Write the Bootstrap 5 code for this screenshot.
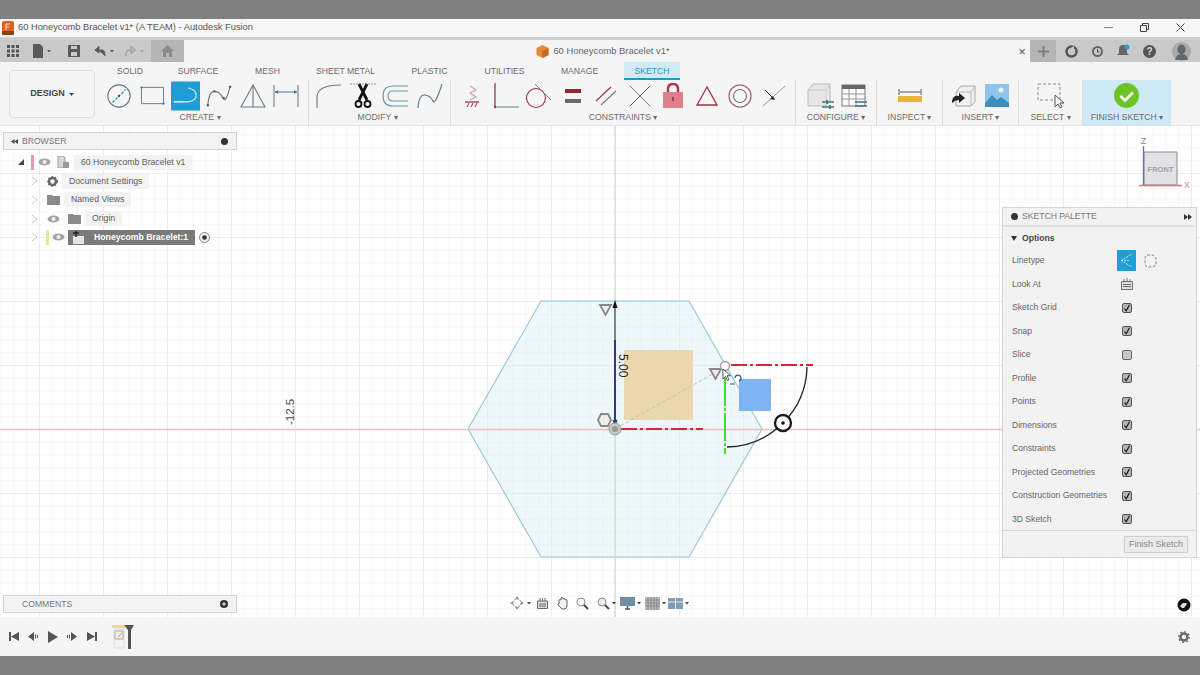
<!DOCTYPE html>
<html lang="en"><head><meta charset="utf-8"><title>Autodesk Fusion</title>
<link href="https://cdn.jsdelivr.net/npm/bootstrap@5.3.0/dist/css/bootstrap.min.css" rel="stylesheet">
<style>
html,body{height:675px;width:1200px;overflow:hidden;margin:0}
body{font-family:"Liberation Sans",Arial,sans-serif;color:#555;background:#808080;font-size:9px;line-height:1}
.edge-top{height:19px;background:#808080}
.edge-bot{height:19px;background:#808080}
.titlebar{height:18px;font-size:9.3px;background:#f7f7f7;color:#555;padding-left:2px}
.titlebar .ttl{margin-left:4px}
.winrow{padding-right:2px}
.winbtn{width:36px;text-align:center}
.qat{height:25px;border-top:3px solid #cfcfcf;background:#f5f5f5}
.qat-l{width:184px;background:#c9c9c9}
.mg2{margin-left:2px}.mg4{margin-left:4px}.mg5{margin-left:5.5px}.mg7{margin-left:7px}.mg8{margin-left:8px}.mg9{margin-left:9px}.mg10{margin-left:10px}.mg13{margin-left:13px}.mg14{margin-left:14px}.mg16{margin-left:16px}.mg17{margin-left:17px}.mg3{margin-left:3px}.mg6{margin-left:6px}
.qat-home{width:33px;background:#b5b5b5;height:100%;margin-left:auto}
.qat-mid{font-size:9.4px;color:#666;padding-left:8px}
.qat-x{width:16px;color:#555;font-size:13px}
.qat-r{width:170px;background:#c9c9c9}
.qat-plus{width:26px;height:100%;background:#b5b5b5}
.ribbon{height:64px;background:#f5f5f5;border-bottom:1px solid #e4e4e4}
.design-col{width:102px;padding:8px 0 0 9px;flex:none}
.design-btn{width:86px;height:48px;border:1px solid #dedede;border-radius:2px;background:#f5f5f5;font-size:9px;font-weight:700;color:#444}
.tabs{height:18px;font-size:8.6px;color:#6a6a6a}
.tabitem{text-align:center;height:18px;line-height:18px}
.t1{width:56px}.t2{width:80px}.t3{width:59px}.t4{width:97px}.t5{width:71px}.t6{width:79px}.t7{width:71px}
.t8{width:56px;margin-left:9px;background:#d2ecf6;color:#1c9cc4;border-bottom:2px solid #1c9cc4;height:18px}
.tool-row{height:46px}
.grp{height:46px;flex:none;border-right:1px solid #dcdcdc}
.g1{width:207px}.g2{width:142px}.g3{width:345px}.g4{width:81px}.g5{width:66px}.g6{width:76px}.g7{width:64px}
.g8{width:88px;background:#cfe9f6;height:46px}
.gicons{height:31px;justify-content:center}
.g1 .gicons{justify-content:flex-start}
.g1 .glabel{padding-right:10px}
.g2 .glabel{padding-right:4px}
.g4 .gicons{padding-left:3px}
.g6 .gicons{padding-right:0}
.g6 .ic:first-child{width:32px}
.g8 .gicons{padding-right:2px}
.ic{width:33.5px;display:flex;align-items:center;justify-content:center;flex:none}
.ic svg{display:block}
.ic-blue{width:33.5px;padding-right:3px}
.glabel{font-size:8.7px;color:#6c6c6c;text-align:center;height:14px;line-height:13px;white-space:nowrap}
.canvasbox{height:491px;position:relative;background:#fff;overflow:hidden}
.canvas-svg{display:block}
.pnl-bar{position:absolute;left:3px;width:234px;height:18px;background:#f3f3f3;border:1px solid #d2d2d2;font-size:8.6px;color:#777;padding:0 8px 0 7px}
.pnl-browser{top:6px}.pnl-comments{top:469px;padding-left:18px}
.dotbtn{width:7px;height:7px;border-radius:50%;background:#333;margin-left:auto;display:block}
.tree{position:absolute;left:14px;top:27px;font-size:8.7px;color:#5c5c5c}
.trow{height:18.75px}
.tlabel{background:#f3f3f3;height:15px;line-height:15px;padding:0 7px}
.tarrow{width:0;height:0;border-left:5px solid #fff;border-top:4px solid transparent;border-bottom:4px solid transparent;margin:0 10px 0 18px;filter:drop-shadow(0 0 .7px #111)}
.tarrow-s{margin-right:9px}
.tsel{background:#7a7a7a;color:#fff;font-weight:700;height:15px;line-height:15px;width:127px;padding-left:26px;white-space:nowrap;position:relative}
.palette{position:absolute;left:1002px;top:81px;width:195px;height:351px;background:#f2f2f2;border:1px solid #d4d4d4;font-size:8.6px;color:#666}
.pal-head{height:19px;border-bottom:2px solid #e0e0e0;padding:0 4px 0 8px;color:#777}
.pal-opt{height:22px;padding:1px 0 0 8px;font-weight:700;color:#444}
.caret-d{width:0;height:0;border-left:3px solid transparent;border-right:3px solid transparent;border-top:5px solid #333;margin-right:5px}
.pal-row{height:23.5px;padding-left:9px;white-space:nowrap}
.pal-lab{width:104px;flex:none}
.pal-ctl{width:22px;display:flex;justify-content:center;flex:none}
.pal-foot{position:absolute;left:0;right:0;bottom:0;height:27px;border-top:1px solid #d8d8d8;padding:0 8px}
.finbtn{font-size:9px;padding:0;width:64px;height:17px;line-height:15px;background:#ebebeb;border:1px solid #cfcfcf;color:#888;border-radius:0}
.form-check-input.chk{width:10px;height:10px;margin:0;border:1px solid #666;border-radius:2px;background-color:#c8c8c8;opacity:1;float:none}
.form-check-input.chk:checked{background-color:#b4b4b4;border-color:#555;background-size:10px 10px;background-image:url("data:image/svg+xml,%3csvg xmlns='http://www.w3.org/2000/svg' viewBox='0 0 10 10'%3e%3cpath fill='none' stroke='%23111' stroke-width='1.1' d='M2.5 5.5l1.7 2.2L7.500 1.8'/%3e%3c/svg%3e")}
.lt-on{width:19px;height:21px;background:#1f9fd5;display:flex;align-items:center;justify-content:center;margin-left:1px}
.navtool{position:absolute;left:510px;top:469px;height:16px}
.timeline{height:39px;background:#f5f5f5;padding:0 10px 0 4px}
.tl-ctl{width:19.5px;display:flex;justify-content:center}
</style></head>
<body>
<div class="edge-top"></div>
<div class="titlebar d-flex align-items-center">
  <svg width="12" height="14" viewBox="0 0 12 14"><rect width="12" height="14" rx="2" fill="#d9641e"/><rect y="10" width="12" height="4" rx="1" fill="#8c3d12"/><path d="M4 3h4M4 3v6M4 6h3" stroke="#ffd9b0" stroke-width="1.200" fill="none"/></svg>
  <span class="ttl">60 Honeycomb Bracelet v1* (A TEAM) - Autodesk Fusion</span>
  <div class="ms-auto d-flex align-items-center winrow">
    <div class="winbtn"><svg width="9" height="9" viewBox="0 0 9 9"><path d="M0 4.500h9" stroke="#888"/></svg></div>
    <div class="winbtn"><svg width="9" height="9" viewBox="0 0 9 9"><path d="M.5 2.500h6v6h-6zM2.500 2.500v-2h6v6h-2" fill="none" stroke="#444"/></svg></div>
    <div class="winbtn"><svg width="9" height="9" viewBox="0 0 9 9"><path d="M.5.5l8 8M8.500.5l-8 8" stroke="#444"/></svg></div>
  </div>
</div>
<div class="qat d-flex">
  <div class="qat-l d-flex align-items-center">
    <svg class="mg7" width="12" height="12" viewBox="0 0 12 12" fill="#555"><path d="M0 0h3v3H0zM4.500 0h3v3h-3zM9 0h3v3H9zM0 4.500h3v3H0zM4.500 4.500h3v3h-3zM9 4.500h3v3H9zM0 9h3v3H0zM4.500 9h3v3h-3zM9 9h3v3H9z"/></svg>
    <svg class="mg14" width="18" height="14" viewBox="0 0 18 14" fill="#5a5a5a"><path d="M0 0h7l3 3v11H0z"/><path d="M14 6h4l-2 2.500z"/></svg>
    <svg class="mg17" width="12" height="12" viewBox="0 0 12 12"><path d="M0 0h12v12H0z" fill="#5a5a5a"/><path d="M3 1h6v3H3zM3 7h6v4H3z" fill="#c9c9c9"/></svg>
    <svg class="mg14" width="21" height="11" viewBox="0 0 21 11"><path d="M1 4l4-3.500V7zM4 4h4q3 0 3 6" fill="#5a5a5a" stroke="#5a5a5a"/><path d="M16 4h4l-2 2.500z" fill="#5a5a5a"/></svg>
    <svg class="mg9" width="21" height="11" viewBox="0 0 21 11"><path d="M11 4L7 .5V7zM8 4H5q-3 0-3 6" fill="none" stroke="#a5a5a5" stroke-width="1.500"/><path d="M16 4h4l-2 2.500z" fill="#a5a5a5"/></svg>
    <div class="qat-home d-flex align-items-center justify-content-center"><svg width="13" height="12" viewBox="0 0 13 12" fill="#8b8b8b"><path d="M6.500 0L13 6h-2v6H8V8H5v4H2V6H0z"/></svg></div>
  </div>
  <div class="qat-mid flex-grow-1 d-flex align-items-center justify-content-center">
    <svg class="me-1" width="13" height="13" viewBox="0 0 13 13"><path d="M6.500 0l6 3v7l-6 3-6-3V3z" fill="#e58a33"/><path d="M6.500 6l6-3v7l-6 3z" fill="#c96a1a"/></svg>
    <span>60 Honeycomb Bracelet v1*</span>
  </div>
  <div class="qat-x text-center align-self-center">&times;</div>
  <div class="qat-r d-flex align-items-center">
    <div class="qat-plus d-flex align-items-center justify-content-center"><svg width="11" height="11" viewBox="0 0 11 11"><path d="M5.500 0v11M0 5.500h11" stroke="#7e7e7e" stroke-width="2"/></svg></div>
    <svg class="mg9" width="13" height="13" viewBox="0 0 13 13"><circle cx="6.500" cy="6.500" r="5" fill="none" stroke="#555" stroke-width="2.500"/><path d="M6 3l3-2v3z" fill="#c9c9c9"/></svg>
    <svg class="mg13" width="13" height="13" viewBox="0 0 13 13"><circle cx="6.500" cy="6.500" r="5.500" fill="#666"/><circle cx="6.500" cy="6.500" r="3.500" fill="#ccc"/><path d="M6.500 4v3h2" stroke="#444" fill="none"/></svg>
    <svg class="mg13" width="13" height="14" viewBox="0 0 13 14"><path d="M6 1q4 0 4 5v3l2 2H0l2-2V6q0-5 4-5z" fill="#666"/><circle cx="10" cy="3" r="2.500" fill="#1f9fd5"/></svg>
    <svg class="mg13" width="13" height="13" viewBox="0 0 13 13"><circle cx="6.500" cy="6.500" r="6.500" fill="#555"/><text x="6.500" y="10" font-size="10" font-weight="700" fill="#ddd" text-anchor="middle" font-family="Liberation Sans">?</text></svg>
    <svg class="mg16" width="19" height="19" viewBox="0 0 19 19"><circle cx="9.500" cy="9.500" r="9.500" fill="#a9a9a9"/><ellipse cx="9.500" cy="7.500" rx="4" ry="5" fill="#5f6870"/><path d="M3 18q1-6 6.500-6T16 18z" fill="#5f6870"/></svg>
  </div>
</div>
<div class="ribbon d-flex">
  <div class="design-col"><button type="button" class="btn design-btn d-flex align-items-center justify-content-center gap-1 p-0 rounded-1">DESIGN <svg width="5" height="3" viewBox="0 0 5 3"><path d="M0 0h5L2.500 3z" fill="#444"/></svg></button></div>
  <div class="flex-grow-1">
    <div class="tabs d-flex">
      <div class="tabitem t1">SOLID</div><div class="tabitem t2">SURFACE</div><div class="tabitem t3">MESH</div><div class="tabitem t4">SHEET METAL</div><div class="tabitem t5">PLASTIC</div><div class="tabitem t6">UTILITIES</div><div class="tabitem t7">MANAGE</div><div class="tabitem t8">SKETCH</div>
    </div>
    <div class="tool-row d-flex">
      <div class="grp g1">
        <div class="gicons d-flex">
          <div class="ic"><svg width="26" height="26" viewBox="0 0 28 28"><circle cx="14" cy="14" r="12" fill="none" stroke="#5b7684" stroke-width="1.200"/><path d="M7 21L21 7" stroke="#2a9bc9" stroke-width="1.500" stroke-dasharray="3 1.500"/><circle cx="14" cy="14" r="1.300" fill="#456"/></svg></div>
          <div class="ic"><svg width="27" height="23" viewBox="0 0 28 24"><path d="M2.500 3.500h23v17h-23z" fill="none" stroke="#6a7a84"/><path d="M1.500 2.500h2v2h-2zM24.500 19.500h2v2h-2z" fill="#2a7ba9"/></svg></div>
          <div class="ic"><svg width="29" height="30" viewBox="0 0 30 30"><rect width="30" height="30" fill="#1d9ed6"/><path d="M3 21h15q8-1 8-7 0-5-7-7" fill="none" stroke="#cfeaf6" stroke-width="1.200"/><path d="M18 7h2M3 21h10" stroke="#fff" stroke-dasharray="2 1"/></svg></div>
          <div class="ic"><svg width="26" height="26" viewBox="0 0 28 28"><path d="M2 24Q3 9 9 9t9 7 8-12" fill="none" stroke="#6a7a84" stroke-width="1.200"/><g fill="#4a6070"><circle cx="2" cy="24" r="1.300"/><circle cx="9" cy="9" r="1.300"/><circle cx="19" cy="16" r="1.300"/><circle cx="26" cy="4" r="1.300"/></g></svg></div>
          <div class="ic"><svg width="26" height="26" viewBox="0 0 26 26"><path d="M13 2L1 24h24zM13 2v22" fill="none" stroke="#6d7a82" stroke-width="1.100"/></svg></div>
          <div class="ic"><svg width="26" height="24" viewBox="0 0 26 24"><path d="M1 1v22M25 1v22" stroke="#6d7a82"/><path d="M2 8h22" stroke="#2a7ba9"/><path d="M2 8l3-2v4zM24 8l-3-2v4z" fill="#2a7ba9"/></svg></div>
        </div>
        <div class="glabel">CREATE <span class="small">&#9662;</span></div>
      </div>
      <div class="grp g2">
        <div class="gicons d-flex">
          <div class="ic"><svg width="28" height="26" viewBox="0 0 28 26"><path d="M2 25V14Q2 2 26 2" fill="none" stroke="#6c7a82" stroke-width="1.100"/></svg></div>
          <div class="ic"><svg width="26" height="26" viewBox="0 0 26 26"><path d="M0 1h26" stroke="#999" stroke-dasharray="2 1"/><path d="M9 1l8 16M17 1L9 17" stroke="#111" stroke-width="2.800"/><circle cx="8.500" cy="21" r="3" fill="none" stroke="#111" stroke-width="1.800"/><circle cx="17.500" cy="21" r="3" fill="none" stroke="#111" stroke-width="1.800"/></svg></div>
          <div class="ic"><svg width="28" height="22" viewBox="0 0 28 22"><path d="M26 1H11Q1 1 1 11t10 10h15M26 6H11q-5 0-5 5t5 5h15" fill="none" stroke="#6d98aa" stroke-width="1.200"/></svg></div>
          <div class="ic"><svg width="26" height="26" viewBox="0 0 26 26"><path d="M1 25q1-14 7-13t8 6 9-17" fill="none" stroke="#5f8494" stroke-width="1.200"/></svg></div>
        </div>
        <div class="glabel">MODIFY <span class="small">&#9662;</span></div>
      </div>
      <div class="grp g3">
        <div class="gicons d-flex">
          <div class="ic"><svg width="16" height="24" viewBox="0 0 16 24"><path d="M6 2l6 4-6 3 6 4-6 3" fill="none" stroke="#c9a9a9" stroke-width="1.200"/><path d="M1 18h14" stroke="#a03048" stroke-width="1.300"/><path d="M3 23l2-4M7 23l2-4M11 23l2-4" stroke="#a03048"/></svg></div>
          <div class="ic"><svg width="26" height="26" viewBox="0 0 26 26"><path d="M2 0v24" stroke="#a03048" stroke-width="1.300"/><path d="M2 24h24" stroke="#6d7a82"/><rect x="1" y="23" width="2" height="2" fill="#a03048"/></svg></div>
          <div class="ic"><svg width="26" height="26" viewBox="0 0 26 26"><circle cx="10" cy="15" r="9.500" fill="none" stroke="#a03048" stroke-width="1.100"/><path d="M9 1l16 16" stroke="#7a7a7a"/></svg></div>
          <div class="ic"><svg width="18" height="14" viewBox="0 0 18 14"><path d="M1 0h16v4H1z" fill="#9c2438"/><path d="M1 10h16v4H1z" fill="#6a6a6a"/></svg></div>
          <div class="ic"><svg width="22" height="20" viewBox="0 0 22 20"><path d="M1 15L16 1" stroke="#a03048" stroke-width="1.100"/><path d="M6 19L21 5" stroke="#7a7a7a" stroke-width="1.100"/></svg></div>
          <div class="ic"><svg width="22" height="22" viewBox="0 0 22 22"><path d="M1 1l20 20" stroke="#7a7a7a"/><path d="M21 1L1 21" stroke="#a03048"/></svg></div>
          <div class="ic"><svg width="20" height="25" viewBox="0 0 20 25"><path d="M5 10V6q0-5 5-5t5 5v4" fill="none" stroke="#a53a50" stroke-width="2.500"/><rect y="9" width="20" height="16" fill="#df7f8e"/><rect x="9" y="14" width="2" height="4" fill="#a53a50"/></svg></div>
          <div class="ic"><svg width="22" height="20" viewBox="0 0 22 20"><path d="M11 1L1 19h20z" fill="none" stroke="#a03048" stroke-width="1.300"/></svg></div>
          <div class="ic"><svg width="24" height="24" viewBox="0 0 24 24"><circle cx="12" cy="12" r="11" fill="none" stroke="#a05060" stroke-width="1.100"/><circle cx="12" cy="12" r="6.500" fill="none" stroke="#777" stroke-width="1.100"/></svg></div>
          <div class="ic"><svg width="24" height="22" viewBox="0 0 24 22"><path d="M1 21L23 1" stroke="#999"/><path d="M3 5l9 9" stroke="#222"/><path d="M13 15l-5-1 3-3z" fill="#222"/></svg></div>
        </div>
        <div class="glabel">CONSTRAINTS <span class="small">&#9662;</span></div>
      </div>
      <div class="grp g4">
        <div class="gicons d-flex">
          <div class="ic"><svg width="28" height="26" viewBox="0 0 28 26"><path d="M1 7l5-6h17v18l-5 4H1z" fill="#e6e6e6" stroke="#bbb"/><path d="M1 7h18v16M19 7l4-6" fill="none" stroke="#ccc"/><path d="M15 19h12M15 24h12" stroke="#46708a" stroke-width="1.400"/><rect x="19" y="17" width="2" height="4" fill="#3a8a7a"/><rect x="22" y="22" width="2" height="4" fill="#3a8a7a"/></svg></div>
          <div class="ic"><svg width="26" height="24" viewBox="0 0 26 24"><rect x="1" y="1" width="23" height="21" fill="#fafafa" stroke="#777"/><rect x="1" y="1" width="23" height="4" fill="#666"/><path d="M1 10h23M1 15h23M8 5v17M15 5v17" stroke="#999"/><path d="M14 18h12M14 22h12" stroke="#46708a" stroke-width="1.300"/></svg></div>
        </div>
        <div class="glabel">CONFIGURE <span class="small">&#9662;</span></div>
      </div>
      <div class="grp g5">
        <div class="gicons d-flex">
          <div class="ic"><svg width="24" height="14" viewBox="0 0 24 14"><path d="M1 0v6M23 0v6M2 3h20" stroke="#555"/><rect y="7" width="24" height="6" fill="#e8b23c"/></svg></div>
        </div>
        <div class="glabel">INSPECT <span class="small">&#9662;</span></div>
      </div>
      <div class="grp g6">
        <div class="gicons d-flex">
          <div class="ic"><svg width="24" height="22" viewBox="0 0 24 22"><path d="M4 7l5-6h14v16l-4 4H4z" fill="#f0f0f0" stroke="#aaa"/><path d="M4 7h15v14M19 7l4-6" fill="none" stroke="#bbb"/><path d="M0 16q1-6 7-5V8l6 5-6 5v-3q-4 0-7 3z" fill="#222"/></svg></div>
          <div class="ic"><svg width="24" height="23" viewBox="0 0 24 23"><rect width="24" height="23" fill="#8dc6ea"/><circle cx="16" cy="6" r="2.500" fill="#e6f4fc"/><path d="M0 19l7-8 5 5 4-3 8 6v4H0z" fill="#3d8fc2"/></svg></div>
        </div>
        <div class="glabel">INSERT <span class="small">&#9662;</span></div>
      </div>
      <div class="grp g7">
        <div class="gicons d-flex">
          <div class="ic"><svg width="28" height="26" viewBox="0 0 28 26"><path d="M1 1h22v16H1z" fill="none" stroke="#6d9a85" stroke-dasharray="3 2"/><path d="M18 12v12l3-3 2 4 2-1-2-4h4z" fill="#f4f4f4" stroke="#555"/></svg></div>
        </div>
        <div class="glabel">SELECT <span class="small">&#9662;</span></div>
      </div>
      <div class="g8">
        <div class="gicons d-flex">
          <div class="ic"><svg width="25" height="25" viewBox="0 0 25 25"><circle cx="12.500" cy="12.500" r="12.500" fill="#6cc524"/><path d="M6.500 13l4.500 4.500 8-8" fill="none" stroke="#f3f3f3" stroke-width="2.800"/></svg></div>
        </div>
        <div class="glabel">FINISH SKETCH <span class="small">&#9662;</span></div>
      </div>
    </div>
  </div>
</div>
<div class="canvasbox">
  <svg class="canvas-svg" width="1200" height="491" viewBox="0 126 1200 491">
    <defs>
      <pattern id="mn" x="39" y="45" width="12.800" height="12.800" patternUnits="userSpaceOnUse"><path d="M12.800 0H0V12.800" fill="none" stroke="#f1f1f1" stroke-width="1"/></pattern>
      <pattern id="mj" x="39" y="45" width="64" height="64" patternUnits="userSpaceOnUse"><path d="M64 0H0V64" fill="none" stroke="#dfdfdf" stroke-width="1"/></pattern>
    </defs>
    <rect x="0" y="126" width="1200" height="491" fill="#fff"/>
    <rect x="0" y="126" width="1200" height="491" fill="url(#mn)"/>
    <rect x="0" y="126" width="1200" height="491" fill="url(#mj)"/>
    <polygon points="468,429 541,301 689,301 762,429 689,557 541,557" fill="#cfe8f6" fill-opacity=".36" stroke="#97c8d3" stroke-width="1.200"/>
    <path d="M0 429.500H1200" stroke="#f0bcbc" stroke-width="1.300"/>
    <path d="M615 126V617" stroke="#b9dfb9"/>
    <text transform="translate(294,425) rotate(-90)" font-family="Liberation Sans" font-size="11.500" fill="#444">-12.5</text>
    <rect x="624" y="350" width="69" height="70" fill="#ebd8ad"/>
    <rect x="739" y="379" width="32" height="32" fill="#7fb4f4"/>
    <path d="M615 429L725 367" stroke="#c4c4b0" stroke-dasharray="4 2"/>
    <path d="M615 303V340" stroke="#666" stroke-width="1.500"/>
    <path d="M615 340V426" stroke="#2c3a8c" stroke-width="2"/>
    <path d="M615 300l-2.500 8h5z" fill="#111"/>
    <path d="M615 428l-2.500-8h5z" fill="#2c3a8c"/>
    <text transform="translate(619,354) rotate(90)" font-family="Liberation Sans" font-size="12" fill="#222">5.00</text>
    <path d="M621 429H703" stroke="#d9223c" stroke-width="2" stroke-dasharray="16 3 3 3"/>
    <path d="M731 365H813" stroke="#d9223c" stroke-width="2" stroke-dasharray="16 3 3 3"/>
    <path d="M725 378V454" stroke="#39e039" stroke-width="2" stroke-dasharray="28 2 3 2"/>
    <path d="M727 447A82 82 0 0 0 807 367" fill="none" stroke="#222" stroke-width="1.300"/>
    <path d="M600 305h11l-5.500 10z" fill="#eee" stroke="#888" stroke-width="1.800"/>
    <path d="M710 369h11l-5.500 10z" fill="#eee" stroke="#888" stroke-width="1.800"/>
    <path d="M601 414h7l3 6-3 6h-7l-3-6z" fill="#eee" stroke="#888" stroke-width="1.800"/>
    <circle cx="615" cy="429" r="6" fill="#c8c8c8" stroke="#999"/>
    <circle cx="615" cy="429" r="3" fill="#999"/>
    <circle cx="725" cy="366" r="4.500" fill="#fff" stroke="#999" stroke-width="1.300"/>
    <path d="M723 369v10l2.500-2.500 2 4 1.500-.8-2-4h3.500z" fill="#fff" stroke="#333" stroke-width=".8"/>
    <path d="M730 384h5M739 381a3 3 0 1 0-4-3" fill="none" stroke="#2c5a8c" stroke-width="1.200"/>
    <circle cx="783" cy="423" r="8" fill="#fff" stroke="#1a1a1a" stroke-width="2.300"/>
    <circle cx="783" cy="423" r="1.800" fill="#111"/>
    <path d="M1144 185h33v-33h-33z" fill="#e2e2e6" stroke="#8b8b93"/>
    <path d="M1143.500 146V186" stroke="#6d6db4" stroke-width="1.300"/>
    <path d="M1139 185.500H1182" stroke="#cc7c7c" stroke-width="1.500"/>
    <text x="1160.500" y="172" text-anchor="middle" font-family="Liberation Sans" font-size="7.500" font-weight="700" fill="#a0a0a0">FRONT</text>
    <text x="1141" y="144" font-family="Liberation Sans" font-size="8.500" fill="#7b7bb8">Z</text>
    <text x="1184" y="188" font-family="Liberation Sans" font-size="8.500" fill="#d08a8a">X</text>
    <circle cx="1184" cy="605" r="6.500" fill="#111"/>
    <path d="M1180 606l3-3h3l1 1-3 4h-2z" fill="#ddd"/>
  </svg>

  <div class="pnl-bar pnl-browser d-flex align-items-center">
    <svg class="me-1" width="7" height="5" viewBox="0 0 7 5" fill="#444"><path d="M3.500 0v5L0 2.500zM7 0v5L3.500 2.500z"/></svg>
    BROWSER <span class="dotbtn"></span>
  </div>
  <div class="tree">
    <div class="trow d-flex align-items-center">
      <svg class="ms-1" width="6" height="6" viewBox="0 0 6 6"><path d="M6 0v6H0z" fill="#444"/></svg>
      <svg class="mg7 me-1" width="3" height="15" viewBox="0 0 3 15"><rect width="3" height="15" fill="#e89aa8"/></svg>
      <svg width="13" height="8" viewBox="0 0 13 8"><ellipse cx="6.500" cy="4" rx="6" ry="3.500" fill="#a5a5a5"/><circle cx="6.500" cy="4" r="2" fill="#eee"/></svg>
      <svg class="mg5" width="12" height="12" viewBox="0 0 12 12"><path d="M1 0h5l2 2v10H1z" fill="#d8d8d8" stroke="#999"/><path d="M6 6h6v6H6z" fill="#9a9a9a"/></svg>
      <span class="tlabel mg5">60 Honeycomb Bracelet v1</span>
    </div>
    <div class="trow d-flex align-items-center">
      <span class="tarrow"></span>
      <svg width="11" height="11" viewBox="0 0 11 11"><circle cx="5.500" cy="5.500" r="3.500" fill="none" stroke="#666" stroke-width="2.500"/><circle cx="5.500" cy="5.500" r="4.800" fill="none" stroke="#666" stroke-width="1.300" stroke-dasharray="1.500 2"/></svg>
      <span class="tlabel ms-1">Document Settings</span>
    </div>
    <div class="trow d-flex align-items-center">
      <span class="tarrow"></span>
      <svg width="13" height="10" viewBox="0 0 13 10"><path d="M0 0h5l1 1h7v9H0z" fill="#8b8b8b"/></svg>
      <span class="tlabel ms-1">Named Views</span>
    </div>
    <div class="trow d-flex align-items-center">
      <span class="tarrow"></span>
      <svg width="13" height="8" viewBox="0 0 13 8"><ellipse cx="6.500" cy="4" rx="6" ry="3.500" fill="#a5a5a5"/><circle cx="6.500" cy="4" r="2" fill="#eee"/></svg>
      <svg class="ms-2" width="13" height="10" viewBox="0 0 13 10"><path d="M0 0h5l1 1h7v9H0z" fill="#8b8b8b"/></svg>
      <span class="tlabel ms-1">Origin</span>
    </div>
    <div class="trow d-flex align-items-center">
      <span class="tarrow tarrow-s"></span>
      <svg width="3" height="15" viewBox="0 0 3 15"><rect width="3" height="15" fill="#efe39a"/></svg>
      <svg class="mg3" width="13" height="8" viewBox="0 0 13 8"><ellipse cx="6.500" cy="4" rx="6" ry="3.500" fill="#a5a5a5"/><circle cx="6.500" cy="4" r="2" fill="#eee"/></svg>
      <div class="tsel mg3">
        <svg class="position-absolute top-0 start-0 ms-1" width="13" height="15" viewBox="0 0 13 15"><path d="M1 6h11v8H1z" fill="#e4e4e4"/><path d="M4 1v6M1 3h6" stroke="#222" stroke-width="1.500"/></svg>
        Honeycomb Bracelet:1
      </div>
      <svg class="ms-1" width="11" height="11" viewBox="0 0 11 11"><circle cx="5.500" cy="5.500" r="5" fill="#eee" stroke="#888"/><circle cx="5.500" cy="5.500" r="2.300" fill="#333"/></svg>
    </div>
  </div>

  <div class="palette">
    <div class="pal-head d-flex align-items-center">
      <span class="dotbtn me-1 ms-0"></span> SKETCH PALETTE
      <svg class="ms-auto" width="8" height="6" viewBox="0 0 8 6" fill="#333"><path d="M0 0l4 3-4 3zM4 0l4 3-4 3z"/></svg>
    </div>
    <div class="pal-opt d-flex align-items-center"><span class="caret-d"></span>Options</div>
    <div class="pal-row d-flex align-items-center"><span class="pal-lab">Linetype</span>
      <div class="lt-on"><svg width="13" height="15" viewBox="0 0 13 15"><path d="M1 7.500L12 1M1 7.500L12 14M1 7.500h9" stroke="#bfe6f6" stroke-dasharray="2 1" fill="none"/></svg></div>
      <svg class="ms-2" width="13" height="14" viewBox="0 0 13 14"><path d="M3 1h6l3 3v7l-3 2H3l-2-2V3z" fill="none" stroke="#888" stroke-dasharray="3 1.500"/></svg>
    </div>
    <div class="pal-row d-flex align-items-center"><span class="pal-lab">Look At</span><div class="pal-ctl"><svg width="12" height="12" viewBox="0 0 12 12"><path d="M.5 3.500h11v8H.5z" fill="#ddd" stroke="#777"/><path d="M3 1v3M6 0v4M9 1v3M2 6.500h8M2 8.500h8" stroke="#777"/></svg></div></div>
    <div class="pal-row d-flex align-items-center"><span class="pal-lab">Sketch Grid</span><div class="pal-ctl"><input class="form-check-input chk" type="checkbox" checked aria-label="Sketch Grid"></div></div>
    <div class="pal-row d-flex align-items-center"><span class="pal-lab">Snap</span><div class="pal-ctl"><input class="form-check-input chk" type="checkbox" checked aria-label="Snap"></div></div>
    <div class="pal-row d-flex align-items-center"><span class="pal-lab">Slice</span><div class="pal-ctl"><input class="form-check-input chk" type="checkbox" aria-label="Slice"></div></div>
    <div class="pal-row d-flex align-items-center"><span class="pal-lab">Profile</span><div class="pal-ctl"><input class="form-check-input chk" type="checkbox" checked aria-label="Profile"></div></div>
    <div class="pal-row d-flex align-items-center"><span class="pal-lab">Points</span><div class="pal-ctl"><input class="form-check-input chk" type="checkbox" checked aria-label="Points"></div></div>
    <div class="pal-row d-flex align-items-center"><span class="pal-lab">Dimensions</span><div class="pal-ctl"><input class="form-check-input chk" type="checkbox" checked aria-label="Dimensions"></div></div>
    <div class="pal-row d-flex align-items-center"><span class="pal-lab">Constraints</span><div class="pal-ctl"><input class="form-check-input chk" type="checkbox" checked aria-label="Constraints"></div></div>
    <div class="pal-row d-flex align-items-center"><span class="pal-lab">Projected Geometries</span><div class="pal-ctl"><input class="form-check-input chk" type="checkbox" checked aria-label="Projected Geometries"></div></div>
    <div class="pal-row d-flex align-items-center"><span class="pal-lab">Construction Geometries</span><div class="pal-ctl"><input class="form-check-input chk" type="checkbox" checked aria-label="Construction Geometries"></div></div>
    <div class="pal-row d-flex align-items-center"><span class="pal-lab">3D Sketch</span><div class="pal-ctl"><input class="form-check-input chk" type="checkbox" checked aria-label="3D Sketch"></div></div>
    <div class="pal-foot d-flex align-items-center justify-content-end"><button type="button" class="btn finbtn">Finish Sketch</button></div>
  </div>

  <div class="pnl-bar pnl-comments d-flex align-items-center">
    <span>COMMENTS</span>
    <span class="ms-auto d-flex"><svg width="8" height="8" viewBox="0 0 8 8"><circle cx="4" cy="4" r="4" fill="#333"/><path d="M4 2v4M2 4h4" stroke="#eee"/></svg></span>
  </div>

  <div class="navtool d-flex align-items-center">
    <svg width="21" height="14" viewBox="0 0 21 14"><circle cx="7" cy="7" r="4" fill="none" stroke="#888" stroke-dasharray="2 1"/><path d="M7 0l2 3H5zM7 14l2-3H5zM0 7l3-2v4zM14 7l-3-2v4z" fill="#999"/><path d="M17 6h4l-2 2.500z" fill="#444"/></svg>
    <svg class="mg5" width="11" height="11" viewBox="0 0 11 11"><path d="M.5 3h10v7.500H.5z" fill="#ddd" stroke="#666"/><path d="M3 0v3M5.500 0v3M8 0v3M2 6h7M2 8h7" stroke="#666"/></svg>
    <svg class="mg8" width="13" height="13" viewBox="0 0 13 13"><path d="M3 7V3q1-1 2 0V1q1-1 2 0v1q1-1 2 0v1q1-1 2 0v6q0 3-3 3H6L2 8q0-2 1-1z" fill="#f3f3f3" stroke="#666"/></svg>
    <svg class="mg7" width="13" height="13" viewBox="0 0 13 13"><circle cx="5" cy="5" r="4" fill="none" stroke="#888"/><path d="M8 8l4 4" stroke="#444" stroke-width="2"/></svg>
    <svg class="mg8" width="19" height="13" viewBox="0 0 19 13"><circle cx="5" cy="5" r="4" fill="#eee" stroke="#888"/><path d="M8 8l4 4" stroke="#444" stroke-width="2"/><path d="M15 5h4l-2 2.500z" fill="#444"/></svg>
    <svg class="mg4" width="21" height="13" viewBox="0 0 21 13"><rect width="15" height="9" fill="#6f8fa8"/><path d="M5 12h5M7.500 9v3" stroke="#555" stroke-width="1.500"/><path d="M17 5h4l-2 2.500z" fill="#444"/></svg>
    <svg class="mg4" width="21" height="13" viewBox="0 0 21 13"><rect width="15" height="13" fill="#bbb"/><path d="M3 0v13M6 0v13M9 0v13M12 0v13M0 3h15M0 6h15M0 9h15" stroke="#8a8a8a"/><path d="M17 5h4l-2 2.500z" fill="#444"/></svg>
    <svg class="mg2" width="21" height="13" viewBox="0 0 21 13"><rect width="15" height="11" y="1" fill="#7f9fb8"/><path d="M7.500 1v11M0 5h15" stroke="#e8e8e8"/><path d="M17 5h4l-2 2.500z" fill="#444"/></svg>
  </div>
</div>
<div class="timeline d-flex align-items-center">
  <div class="tl-ctl"><svg width="10" height="9" viewBox="0 0 10 9" fill="#555"><path d="M0 0h2v9H0zM10 0v9L2 4.500z"/></svg></div>
  <div class="tl-ctl"><svg width="10" height="9" viewBox="0 0 10 9" fill="#555"><path d="M6 0v9L0 4.500zM7 2.500h1v4H7zM9 3h1v3H9z"/></svg></div>
  <div class="tl-ctl"><svg width="10" height="12" viewBox="0 0 10 12" fill="#555"><path d="M0 0l10 6-10 6z"/></svg></div>
  <div class="tl-ctl"><svg width="10" height="9" viewBox="0 0 10 9" fill="#555"><path d="M4 0v9l6-4.500zM3 2.500H2v4h1zM1 3H0v3h1z"/></svg></div>
  <div class="tl-ctl"><svg width="10" height="9" viewBox="0 0 10 9" fill="#555"><path d="M8 0h2v9H8zM0 0v9l8-4.500z"/></svg></div>
  <svg class="mg10" width="22" height="26" viewBox="0 0 22 26"><path d="M0 1h13v3H0z" fill="#efd98a"/><path d="M2 5h10v19H2z" fill="#f2f2f2" stroke="#ddd"/><path d="M3 7h8v8H3z" fill="none" stroke="#aaa"/><path d="M6 13l4-4" stroke="#d08a40"/><path d="M12 1h10l-3 5v19h-3V6z" fill="#555"/></svg>
  <svg class="ms-auto" width="12" height="12" viewBox="0 0 12 12"><circle cx="6" cy="6" r="3.500" fill="none" stroke="#666" stroke-width="2.500"/><circle cx="6" cy="6" r="5.300" fill="none" stroke="#666" stroke-width="1.400" stroke-dasharray="1.700 2.400"/></svg>
</div>
<div class="edge-bot"></div>
<script src="https://cdn.jsdelivr.net/npm/bootstrap@5.3.0/dist/js/bootstrap.bundle.min.js"></script>
</body></html>
